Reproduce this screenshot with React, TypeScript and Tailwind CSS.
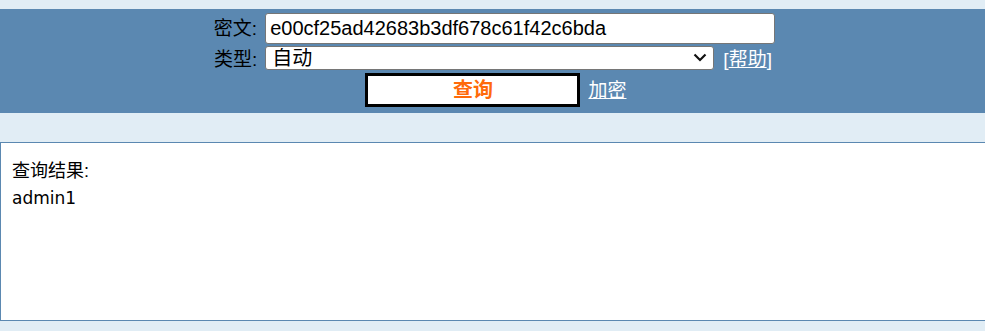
export default function App() {
  const cjk = '"Liberation Sans", "Noto Sans CJK SC", sans-serif';

  return (
    <div className="w-[985px] h-[331px] overflow-hidden bg-[#e1edf5] pt-[9px]" style={{ fontFamily: cjk }}>
      {/* query form band */}
      <div className="h-[104px] bg-[#5b88b1] flex flex-col items-center pt-[4px] text-[19px] text-black">
        <div className="flex items-center h-[31px] pl-[4px]">
          <span className="leading-none">密文:</span>
          <input
            className="ml-[8px] w-[510px] h-[31px] bg-white border border-[#767676] rounded-[3px] px-[4px] text-[20px] outline-none"
            defaultValue="e00cf25ad42683b3df678c61f42c6bda"
          />
        </div>
        <div className="flex items-center h-[24px] mt-[3px] pl-[1px]">
          <span className="leading-none">类型:</span>
          <div className="relative ml-[8px]">
            <select className="appearance-none w-[449px] h-[24px] bg-white border border-[#767676] rounded-[3px] pl-[6px] text-[20px] leading-none">
              <option>自动</option>
            </select>
            <svg
              className="absolute right-[7px] top-[8px] pointer-events-none"
              width="14"
              height="9"
              viewBox="0 0 14 9"
              fill="none"
              stroke="#111"
              strokeWidth="2.2"
            >
              <path d="M1.5 1.5 L7 7 L12.5 1.5" />
            </svg>
          </div>
          <a href="#" className="ml-[9px] text-white leading-none">
            [<span className="underline">帮助</span>]
          </a>
        </div>
        <div className="flex items-center mt-[2px] pl-[7px]">
          <button className="w-[215px] h-[34px] bg-white border-[3px] border-black text-[#ff6a0a] text-[20px] font-bold leading-none">
            查询
          </button>
          <a href="#" className="ml-[8px] text-white underline leading-none">加密</a>
        </div>
      </div>

      {/* result box */}
      <div className="mt-[29px] w-[1000px] h-[179px] bg-white border border-[#5b88b1] pl-[11px] pt-[15px]">
        <div className="text-[18px] leading-[26px]">查询结果:</div>
        <div style={{ fontFamily: '"DejaVu Sans", sans-serif' }} className="mt-[3px] text-[17px] leading-[22px]">admin1</div>
      </div>
    </div>
  );
}
